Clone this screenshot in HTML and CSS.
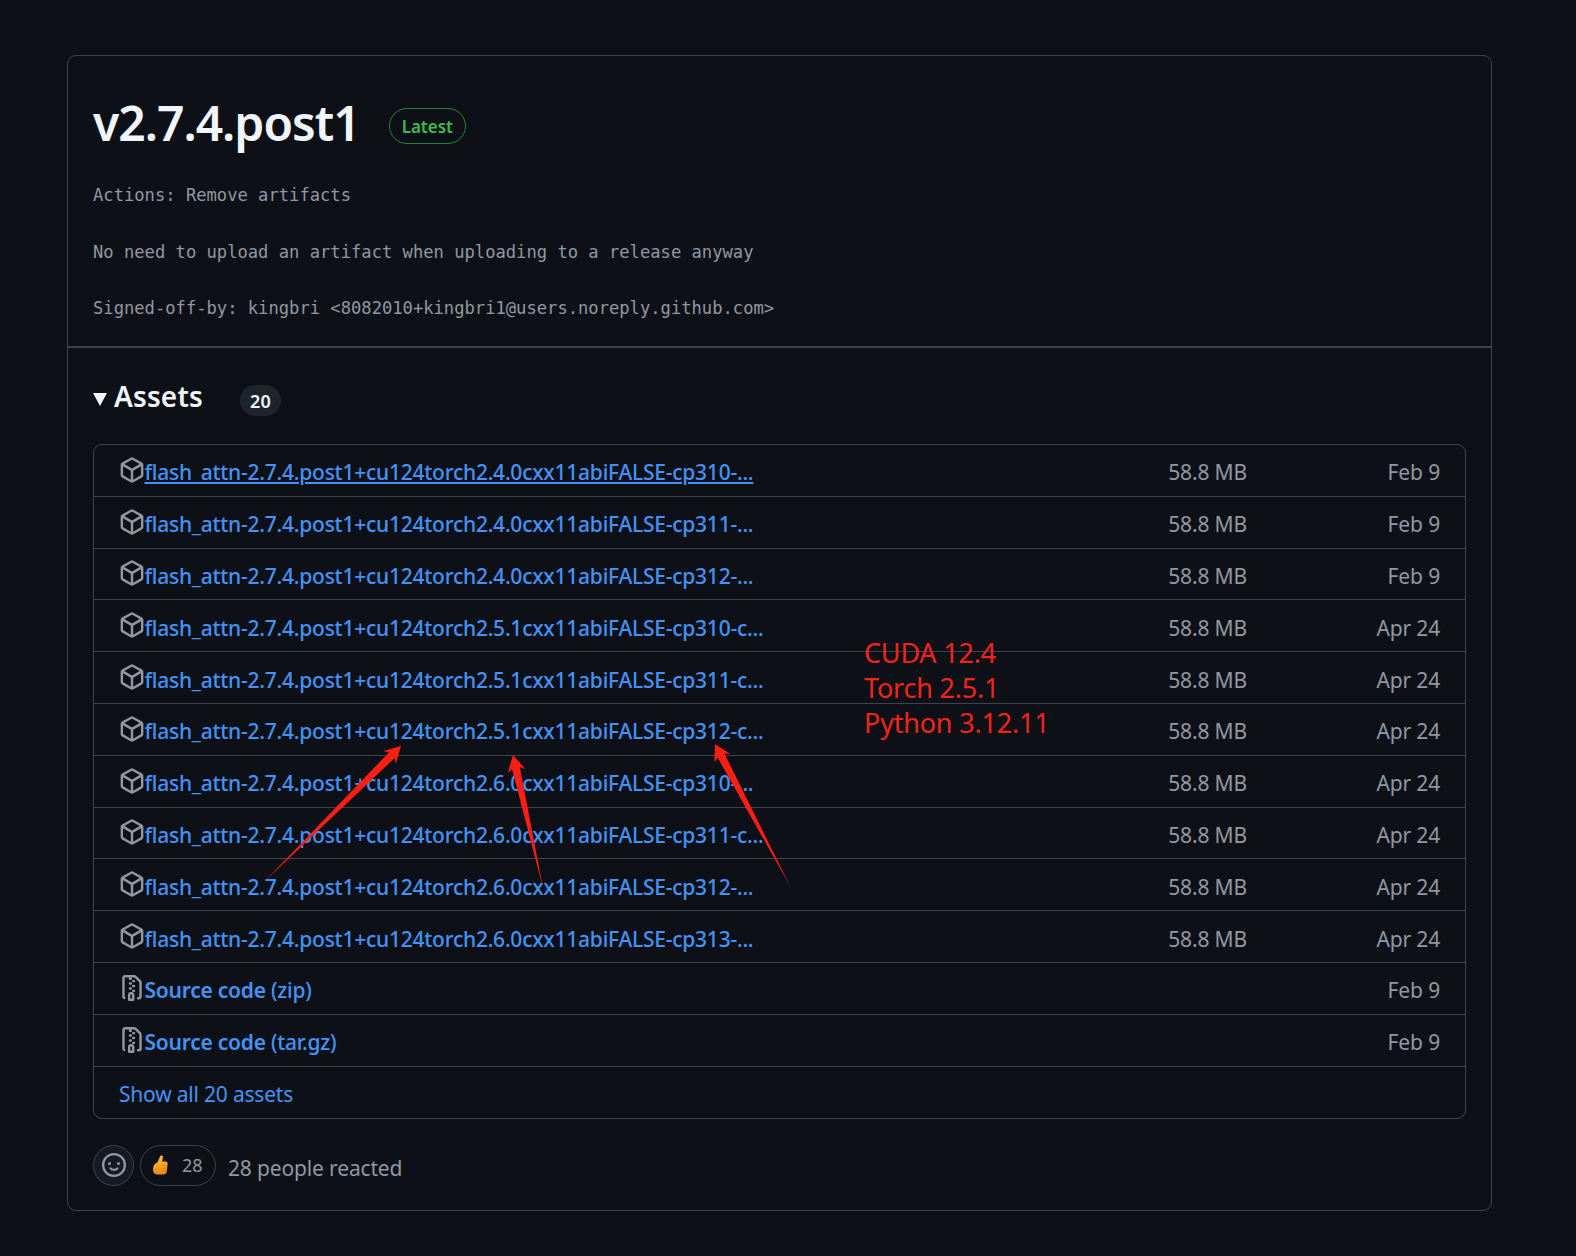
FILE: index.html
```html
<!DOCTYPE html>
<html lang="en">
<head>
<meta charset="utf-8">
<title>v2.7.4.post1</title>
<link rel="stylesheet" href="styles.css">
</head>
<body>
<svg width="0" height="0" class="defs">
  <defs>
    <symbol id="pkg" viewBox="0 0 16 16"><path d="m8.878.392 5.25 3.045c.54.314.872.89.872 1.514v6.098a1.75 1.75 0 0 1-.872 1.514l-5.25 3.045a1.75 1.75 0 0 1-1.756 0l-5.25-3.045A1.75 1.75 0 0 1 1 11.049V4.951c0-.624.332-1.201.872-1.514L7.122.392a1.75 1.75 0 0 1 1.756 0ZM7.875 1.69l-4.63 2.685L8 7.133l4.755-2.758-4.63-2.685a.248.248 0 0 0-.25 0ZM2.5 5.677v5.372c0 .09.047.171.125.216l4.625 2.683V8.432Zm6.25 8.271 4.625-2.683a.25.25 0 0 0 .125-.216V5.677L8.75 8.432Z"/></symbol>
    <symbol id="zip" viewBox="0 0 16 16"><path d="M3.5 1.75v11.5c0 .09.048.173.126.217a.75.75 0 0 1-.752 1.298A1.748 1.748 0 0 1 2 13.25V1.75C2 .784 2.784 0 3.75 0h5.586c.464 0 .909.185 1.237.513l2.914 2.914c.329.328.513.773.513 1.237v8.586A1.75 1.75 0 0 1 12.25 15h-.5a.75.75 0 0 1 0-1.5h.5a.25.25 0 0 0 .25-.25V4.664a.25.25 0 0 0-.073-.177L9.513 1.573a.25.25 0 0 0-.177-.073H7.25a.75.75 0 0 1 0 1.5h-.5a.75.75 0 0 1 0-1.5h-3a.25.25 0 0 0-.25.25Zm3.75 8.75h.5c.966 0 1.75.784 1.75 1.75v3a.75.75 0 0 1-.75.75h-2.5a.75.75 0 0 1-.75-.75v-3c0-.966.784-1.75 1.75-1.75ZM6 5.25a.75.75 0 0 1 .75-.75h.5a.75.75 0 0 1 0 1.5h-.5A.75.75 0 0 1 6 5.25Zm.75 2.25h.5a.75.75 0 0 1 0 1.5h-.5a.75.75 0 0 1 0-1.5ZM8 6.75A.75.75 0 0 1 8.75 6h.5a.75.75 0 0 1 0 1.5h-.5A.75.75 0 0 1 8 6.75ZM8.750 3h.5a.75.75 0 0 1 0 1.5h-.5a.75.75 0 0 1 0-1.5ZM8 9.750A.75.75 0 0 1 8.750 9h.5a.75.75 0 0 1 0 1.500h-.5A.75.75 0 0 1 8 9.750Zm-1 2.500v2.250h1v-2.250a.25.25 0 0 0-.25-.25h-.5a.25.25 0 0 0-.25.25Z"/></symbol>
    <linearGradient id="thumbfill" x1="0" y1="0" x2="0" y2="1">
      <stop offset="0" stop-color="#ffc13a"/>
      <stop offset="1" stop-color="#f08a12"/>
    </linearGradient>
  </defs>
</svg>
<main class="card">
  <header class="head">
    <div class="title-row">
      <h1 class="title">v2.7.4.post1</h1>
      <span class="latest">Latest</span>
    </div>
    <pre class="notes">Actions: Remove artifacts

No need to upload an artifact when uploading to a release anyway

Signed-off-by: kingbri &lt;8082010+kingbri1@users.noreply.github.com&gt;</pre>
  </header>
  <section class="assets">
    <div class="assets-head">
      <span class="caret"></span>
      <h2 class="assets-title">Assets</h2>
      <span class="counter">20</span>
    </div>
    <ul class="list">
      <li class="row"><span class="name"><svg class="icon"><use href="#pkg"/></svg><a class="link under">flash_attn-2.7.4.post1+cu124torch2.4.0cxx11abiFALSE-cp310-...</a></span><span class="size">58.8 MB</span><span class="date">Feb 9</span></li>
      <li class="row"><span class="name"><svg class="icon"><use href="#pkg"/></svg><a class="link">flash_attn-2.7.4.post1+cu124torch2.4.0cxx11abiFALSE-cp311-...</a></span><span class="size">58.8 MB</span><span class="date">Feb 9</span></li>
      <li class="row"><span class="name"><svg class="icon"><use href="#pkg"/></svg><a class="link">flash_attn-2.7.4.post1+cu124torch2.4.0cxx11abiFALSE-cp312-...</a></span><span class="size">58.8 MB</span><span class="date">Feb 9</span></li>
      <li class="row"><span class="name"><svg class="icon"><use href="#pkg"/></svg><a class="link">flash_attn-2.7.4.post1+cu124torch2.5.1cxx11abiFALSE-cp310-c...</a></span><span class="size">58.8 MB</span><span class="date">Apr 24</span></li>
      <li class="row"><span class="name"><svg class="icon"><use href="#pkg"/></svg><a class="link">flash_attn-2.7.4.post1+cu124torch2.5.1cxx11abiFALSE-cp311-c...</a></span><span class="size">58.8 MB</span><span class="date">Apr 24</span></li>
      <li class="row"><span class="name"><svg class="icon"><use href="#pkg"/></svg><a class="link">flash_attn-2.7.4.post1+cu124torch2.5.1cxx11abiFALSE-cp312-c...</a></span><span class="size">58.8 MB</span><span class="date">Apr 24</span></li>
      <li class="row"><span class="name"><svg class="icon"><use href="#pkg"/></svg><a class="link">flash_attn-2.7.4.post1+cu124torch2.6.0cxx11abiFALSE-cp310-...</a></span><span class="size">58.8 MB</span><span class="date">Apr 24</span></li>
      <li class="row"><span class="name"><svg class="icon"><use href="#pkg"/></svg><a class="link">flash_attn-2.7.4.post1+cu124torch2.6.0cxx11abiFALSE-cp311-c...</a></span><span class="size">58.8 MB</span><span class="date">Apr 24</span></li>
      <li class="row"><span class="name"><svg class="icon"><use href="#pkg"/></svg><a class="link">flash_attn-2.7.4.post1+cu124torch2.6.0cxx11abiFALSE-cp312-...</a></span><span class="size">58.8 MB</span><span class="date">Apr 24</span></li>
      <li class="row"><span class="name"><svg class="icon"><use href="#pkg"/></svg><a class="link">flash_attn-2.7.4.post1+cu124torch2.6.0cxx11abiFALSE-cp313-...</a></span><span class="size">58.8 MB</span><span class="date">Apr 24</span></li>
      <li class="row"><span class="name"><svg class="icon"><use href="#zip"/></svg><a class="link"><b class="strong">Source code</b> (zip)</a></span><span class="size"></span><span class="date">Feb 9</span></li>
      <li class="row"><span class="name"><svg class="icon"><use href="#zip"/></svg><a class="link"><b class="strong">Source code</b> (tar.gz)</a></span><span class="size"></span><span class="date">Feb 9</span></li>
      <li class="row"><a class="link show">Show all 20 assets</a></li>
    </ul>
    <div class="reactions">
      <span class="smile">
        <svg class="smile-icon" viewBox="0 0 16 16"><path d="M8 0a8 8 0 1 1 0 16A8 8 0 0 1 8 0ZM1.5 8a6.5 6.5 0 1 0 13 0 6.5 6.5 0 0 0-13 0Zm3.82 1.636a.75.75 0 0 1 1.038.175l.007.009c.103.118.22.222.35.31.264.178.683.37 1.285.37.602 0 1.02-.192 1.285-.371.13-.088.247-.192.35-.31l.007-.008a.75.75 0 0 1 1.222.87l-.022-.015c.02.013.021.015.021.015v.001l-.001.002-.002.003-.005.007-.014.019a2.066 2.066 0 0 1-.184.213c-.16.166-.338.316-.53.445-.63.418-1.37.638-2.127.629-.946 0-1.652-.308-2.126-.63a3.331 3.331 0 0 1-.715-.657l-.014-.02-.005-.006-.002-.003v-.002h-.001l.613-.432-.614.43a.75.75 0 0 1 .183-1.044ZM12 7a1 1 0 1 1-2 0 1 1 0 0 1 2 0ZM5 8a1 1 0 1 1 0-2 1 1 0 0 1 0 2Z"/></svg>
      </span>
      <span class="pill">
        <svg class="thumb" viewBox="0 0 16 20"><path class="thumb-main" d="M5.6 7.2 8 1.6C8.3.6 9.2.2 10 .6c.9.5 1 1.5.8 2.5L10.100 6.600H13.600C15 6.600 15.800 7.600 15.600 8.800L14.800 16.600C14.600 18.200 13.600 19.400 11.800 19.400H6.600C4.200 19.400 2.400 19 1.600 17.400.9 15.800.8 13.400 1.600 11 2.200 9.200 3.800 8 5.600 7.200Z"/><path class="thumb-line" d="M10.500 10.300H15M10.400 13.200H14.800M10.400 16H14.500"/></svg>
        <span class="pill-count">28</span>
      </span>
      <span class="reacted">28 people reacted</span>
    </div>
  </section>
</main>
<svg class="arrows" width="1576" height="1256" viewBox="0 0 1576 1256">
  <polygon points="265,881 394.600,758 395.900,763.700 401,746 383.300,750.900 389,752.400"/>
  <polygon points="543,888 519.800,767 525.400,769 513,755 507.800,773 512,769"/>
  <polygon points="790,886 724.500,753.600 730.400,754 715,744 714.400,762.400 717.500,757.400"/>
</svg>
<div class="note">CUDA 12.4<br>Torch 2.5.1<br>Python 3.12.11</div>
</body>
</html>
```
FILE: styles.css
```css
* { box-sizing: border-box; }
html, body { margin: 0; padding: 0; }
body {
  background: #0d1117;
  font-family: "Noto Sans", "Open Sans", sans-serif;
  color: #9198a1;
  width: 1576px;
  height: 1256px;
  padding: 55px 0 0 67px;
  overflow: hidden;
  position: relative;
}
.defs { position: absolute; }
.card {
  width: 1425px;
  height: 1156px;
  border: 1px solid #3d444d;
  border-radius: 9px;
}
.head {
  height: 292px;
  padding: 36px 25px 0;
  border-bottom: 2px solid #3d444d;
}
.title-row { display: flex; align-items: center; gap: 29px; height: 62px; }
.title {
  margin: 0;
  font-size: 48px;
  line-height: 62px;
  font-weight: 600;
  color: #f0f6fc;
  letter-spacing: -1px;
}
.latest {
  display: flex;
  align-items: center;
  height: 36px;
  margin-top: 6px;
  padding: 0 12px;
  border: 1px solid #238636;
  border-radius: 18px;
  color: #3fb950;
  font-size: 17px;
  font-weight: 600;
}
.notes {
  margin: 27px 0 0;
  font-family: "DejaVu Sans Mono", "Liberation Mono", monospace;
  font-size: 17.15px;
  line-height: 28.25px;
  color: #9198a1;
}
.assets { padding: 0 25px; }
.assets-head { display: flex; align-items: center; height: 96px; }
.caret {
  width: 0; height: 0;
  border-left: 7px solid transparent;
  border-right: 7px solid transparent;
  border-top: 13px solid #f0f6fc;
  margin-top: 7px;
}
.assets-title {
  margin: 0 0 0 7px;
  font-size: 28px;
  line-height: 38px;
  font-weight: 600;
  color: #f0f6fc;
  letter-spacing: 0.15px;
}
.counter {
  margin: 9px 0 0 37px;
  width: 41px;
  height: 31px;
  border-radius: 16px;
  background: #1e242c;
  color: #f0f6fc;
  font-size: 18px;
  font-weight: 600;
  display: flex;
  align-items: center;
  justify-content: center;
}
.list {
  list-style: none;
  margin: 0;
  padding: 0;
  height: 675px;
  border: 1px solid #3d444d;
  border-radius: 9px;
  display: flex;
  flex-direction: column;
}
.row {
  flex: none;
  height: 51.8px;
  display: grid;
  grid-template-columns: 1fr 120px 193px;
  align-items: center;
  padding: 4px 25px 0;
  border-bottom: 1px solid #3d444d;
  font-size: 21px;
}
.row:last-child { flex: 1; border-bottom: 0; }
.name { display: flex; align-items: center; min-width: 0; }
.icon { width: 26px; height: 26px; fill: #9198a1; flex: none; margin: -5px 0 0 -0.5px; }
.link { color: #4493f8; white-space: nowrap; font-weight: 500; letter-spacing: -0.24px; line-height: 28px; }
.under { text-decoration: underline; text-underline-offset: 2px; }
.strong { font-weight: 600; }
.size, .date { text-align: right; white-space: nowrap; letter-spacing: -0.15px; }
.show { grid-column: 1 / -1; font-weight: 400; letter-spacing: -0.2px; }
.reactions { display: flex; align-items: center; margin-top: 25px; height: 42px; }
.smile {
  width: 41px; height: 41px;
  border: 1px solid #3d444d;
  border-radius: 50%;
  background: #151b23;
  display: flex;
  align-items: center;
  justify-content: center;
}
.smile-icon { width: 24px; height: 24px; fill: #9198a1; }
.pill {
  margin-left: 6px;
  width: 76px; height: 41px;
  border: 1px solid #3d444d;
  border-radius: 21px;
  display: flex;
  align-items: center;
  padding-left: 11px;
}
.thumb { width: 16px; height: 20px; }
.thumb-main { fill: url(#thumbfill); }
.thumb-line { fill: none; stroke: #d9780f; stroke-width: .8; }
.pill-count { margin-left: 14px; font-size: 18px; color: #9198a1; }
.reacted { margin: 5px 0 0 12px; font-size: 21px; letter-spacing: -0.15px; }
.arrows { position: absolute; left: 0; top: 0; fill: #fb1e14; pointer-events: none; }
.note {
  position: absolute;
  left: 864px;
  top: 635px;
  color: #f5231a;
  font-size: 27px;
  line-height: 35px;
  letter-spacing: -0.2px;
  font-family: "Noto Sans", sans-serif;
}
```
